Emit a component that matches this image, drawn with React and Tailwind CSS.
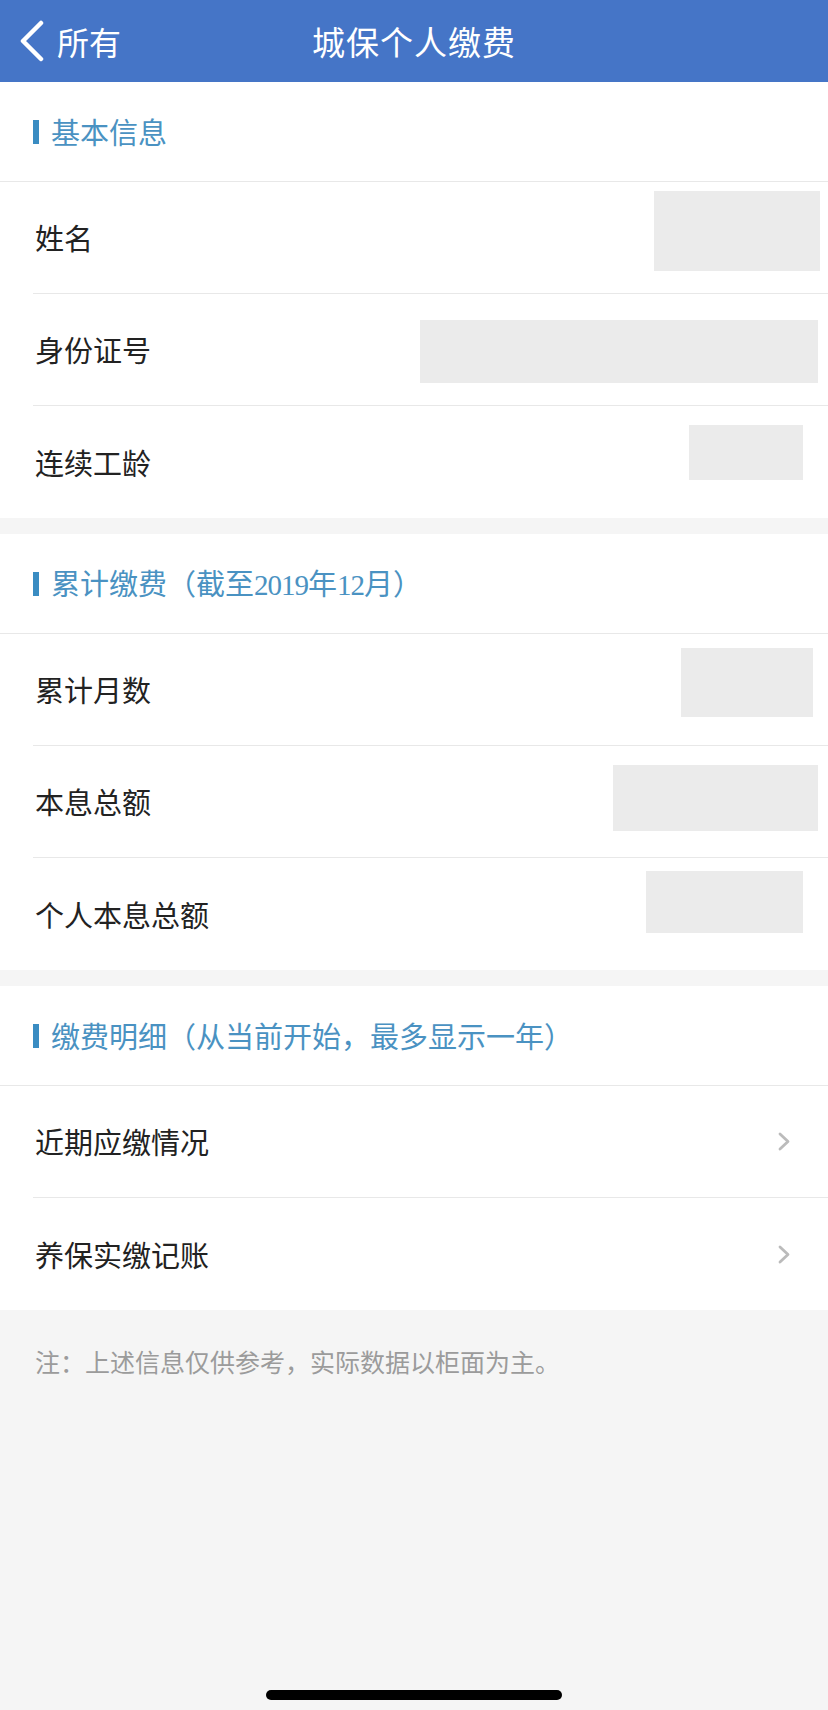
import React from "react";

const font = { fontFamily: '"Noto Sans CJK SC", "Noto Sans", sans-serif' };

const sections = [
    {
        title: (
            <>基本信息</>
        ),
        rows: [
            { label: "姓名", box: "w-[166px] h-[80px] mt-[9px] mr-[8px]" },
            { label: "身份证号", box: "w-[398px] h-[63px] mt-[26px] mr-[10px]" },
            { label: "连续工龄", box: "w-[114px] h-[55px] mt-[19px] mr-[25px]" },
        ],
    },
    {
        title: (
            <>
                累计缴费（截至<span className="font-['Liberation_Serif'] tracking-[-1px]">2019</span>年
                <span className="font-['Liberation_Serif'] tracking-[-1px]">12</span>月）
            </>
        ),
        rows: [
            { label: "累计月数", box: "w-[132px] h-[69px] mt-[14px] mr-[15px]" },
            { label: "本息总额", box: "w-[205px] h-[66px] mt-[19px] mr-[10px]" },
            { label: "个人本息总额", box: "w-[157px] h-[62px] mt-[13px] mr-[25px]" },
        ],
    },
    {
        title: <>缴费明细（从当前开始，最多显示一年）</>,
        rows: [
            { label: "近期应缴情况", link: true },
            { label: "养保实缴记账", link: true },
        ],
    },
];

function Chevron() {
    return (
        <svg width="15" height="21" viewBox="0 0 15 21" fill="none" className="mr-[36px]">
            <path d="M3 3 L11 10.5 L3 18" stroke="#bbbbbb" strokeWidth="2.8" strokeLinecap="round" strokeLinejoin="round" />
        </svg>
    );
}

function Section({ section }) {
    return (
        <div className="bg-white">
            <div className="h-[100px] flex items-center border-b border-[#e8e8e8] pl-[33px]">
                <span className="w-[6px] h-[24px] bg-[#3a8cc2] mr-[12px]"></span>
                <span className="text-[29px] leading-none text-[#4a92c2]">{section.title}</span>
            </div>
            {section.rows.map((row, i) => (
                <div key={row.label} className="pl-[33px]">
                    <div
                        className={`h-[112px] flex justify-between ${row.link ? "items-center" : "items-start"} ${
                            i < section.rows.length - 1 ? "border-b border-[#e8e8e8]" : ""
                        }`}
                    >
                        <span className="ml-[2px] text-[29px] leading-none text-[#222] self-center">{row.label}</span>
                        {row.link ? <Chevron /> : <div className={`bg-[#ebebeb] ${row.box}`}></div>}
                    </div>
                </div>
            ))}
        </div>
    );
}

export default function App() {
    return (
        <div className="min-h-[1710px] flex flex-col bg-[#f5f5f5]" style={font}>
            <div className="h-[82px] bg-[#4575c7] grid grid-cols-[1fr_auto_1fr] items-center text-white">
                <div className="flex items-center">
                    <svg width="30" height="42" viewBox="0 0 30 42" fill="none" className="ml-[16px]">
                        <path d="M25 3 L7 21 L25 39" stroke="#ffffff" strokeWidth="4.5" strokeLinecap="round" strokeLinejoin="round" />
                    </svg>
                    <span className="ml-[11px] text-[32px] leading-none">所有</span>
                </div>
                <div className="text-[33px] leading-none tracking-[1px]">城保个人缴费</div>
                <div></div>
            </div>

            {sections.map((s, i) => (
                <div key={i} className={i > 0 ? "mt-[16px]" : ""}>
                    <Section section={s} />
                </div>
            ))}

            <div className="flex-1 flex flex-col">
                <p className="pt-[34px] pl-[35px] text-[25px] leading-[35px] text-[#9b9b9b]">
                    注：上述信息仅供参考，实际数据以柜面为主。
                </p>
                <div className="mt-auto mb-[10px] mx-auto w-[296px] h-[10px] rounded-full bg-black"></div>
            </div>
        </div>
    );
}
